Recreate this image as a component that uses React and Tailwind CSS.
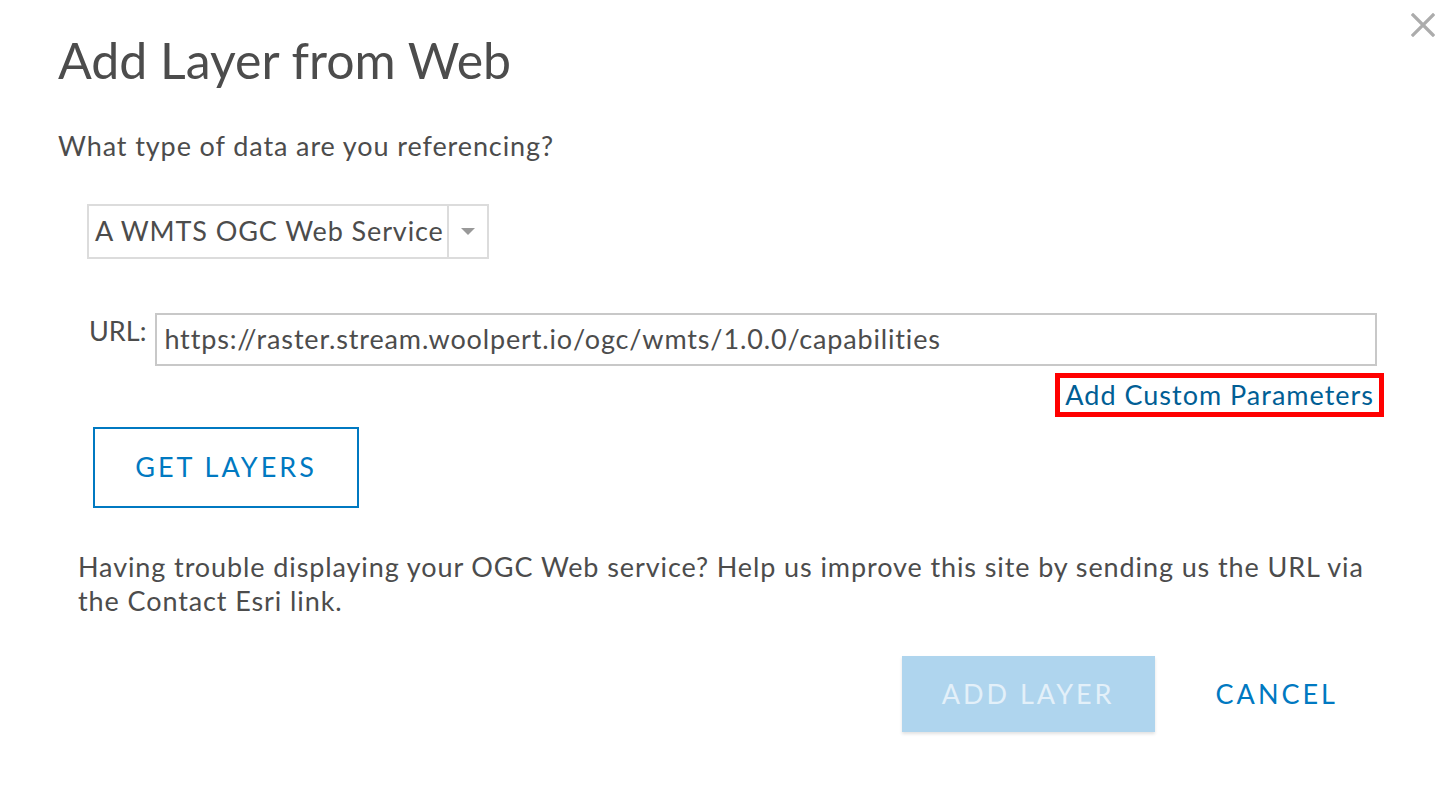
export default function App() {
  return (
    <div
      className="relative w-full h-[790px] bg-white text-[#4c4c4c] overflow-hidden"
      style={{ fontFamily: "Lato, 'Noto Sans', sans-serif" }}
    >
      {/* close */}
      <button className="absolute top-[12px] right-[18px] w-[26px] h-[26px] flex items-center justify-center">
        <svg width="24" height="24" viewBox="0 0 24 24">
          <path d="M2 2 L22 22 M22 2 L2 22" stroke="#acacac" strokeWidth="3.2" strokeLinecap="square" />
        </svg>
      </button>

      <div className="pl-[58px] pr-[77px] pt-[34px]">
        <h1 className="text-[50px] leading-[52px] font-normal text-[#4c4c4c]">Add Layer from Web</h1>

        <p className="mt-[44px] text-[27px] leading-[32px] tracking-[0.9px]">What type of data are you referencing?</p>

        <div className="mt-[42px] ml-[29px] flex w-[402px] h-[55px] border-2 border-[#dcdcdc]">
          <div className="flex-1 flex items-center pl-[6px] text-[27px] tracking-[0.9px]">A WMTS OGC Web Service</div>
          <div className="w-[40px] border-l-2 border-[#dcdcdc] flex items-center justify-center">
            <svg width="14" height="8" viewBox="0 0 14 8">
              <path d="M0 0 H14 L7 7 Z" fill="#999" />
            </svg>
          </div>
        </div>

        <div className="mt-[54px] ml-[31px] flex items-start gap-[9px]">
          <span className="text-[27px] leading-[32px] mt-[2px]">URL:</span>
          <div className="flex-1 h-[53px] border-2 border-[#c8c8c8] flex items-center pl-[7px] text-[27px] tracking-[0.85px]">
            https://raster.stream.woolpert.io/ogc/wmts/1.0.0/capabilities
          </div>
        </div>

        <div className="flex justify-end mt-[7px] mr-[-7px]">
          <a className="border-[5px] border-[#ff0000] px-[5px] h-[44px] flex items-center text-[27px] tracking-[1px] text-[#005e95]">
            Add Custom Parameters
          </a>
        </div>

        <button className="mt-[10px] ml-[35px] w-[266px] h-[81px] border-2 border-[#0079c1] text-[#0079c1] text-[27px] tracking-[3px]">
          GET LAYERS
        </button>

        <p className="mt-[42px] ml-[20px] text-[27px] leading-[34px] tracking-[0.9px]">
          Having trouble displaying your OGC Web service? Help us improve this site by sending us the URL via the Contact Esri link.
        </p>

        <div className="mt-[38px] flex justify-end items-center gap-[61px] mr-[39px]">
          <button className="w-[253px] h-[76px] bg-[#afd5ee] text-[#e3f0f9] text-[27px] tracking-[3px] shadow-[0_2px_3px_rgba(0,0,0,0.12)]">
            ADD LAYER
          </button>
          <button className="text-[#0079c1] text-[27px] tracking-[3px]">CANCEL</button>
        </div>
      </div>
    </div>
  );
}
